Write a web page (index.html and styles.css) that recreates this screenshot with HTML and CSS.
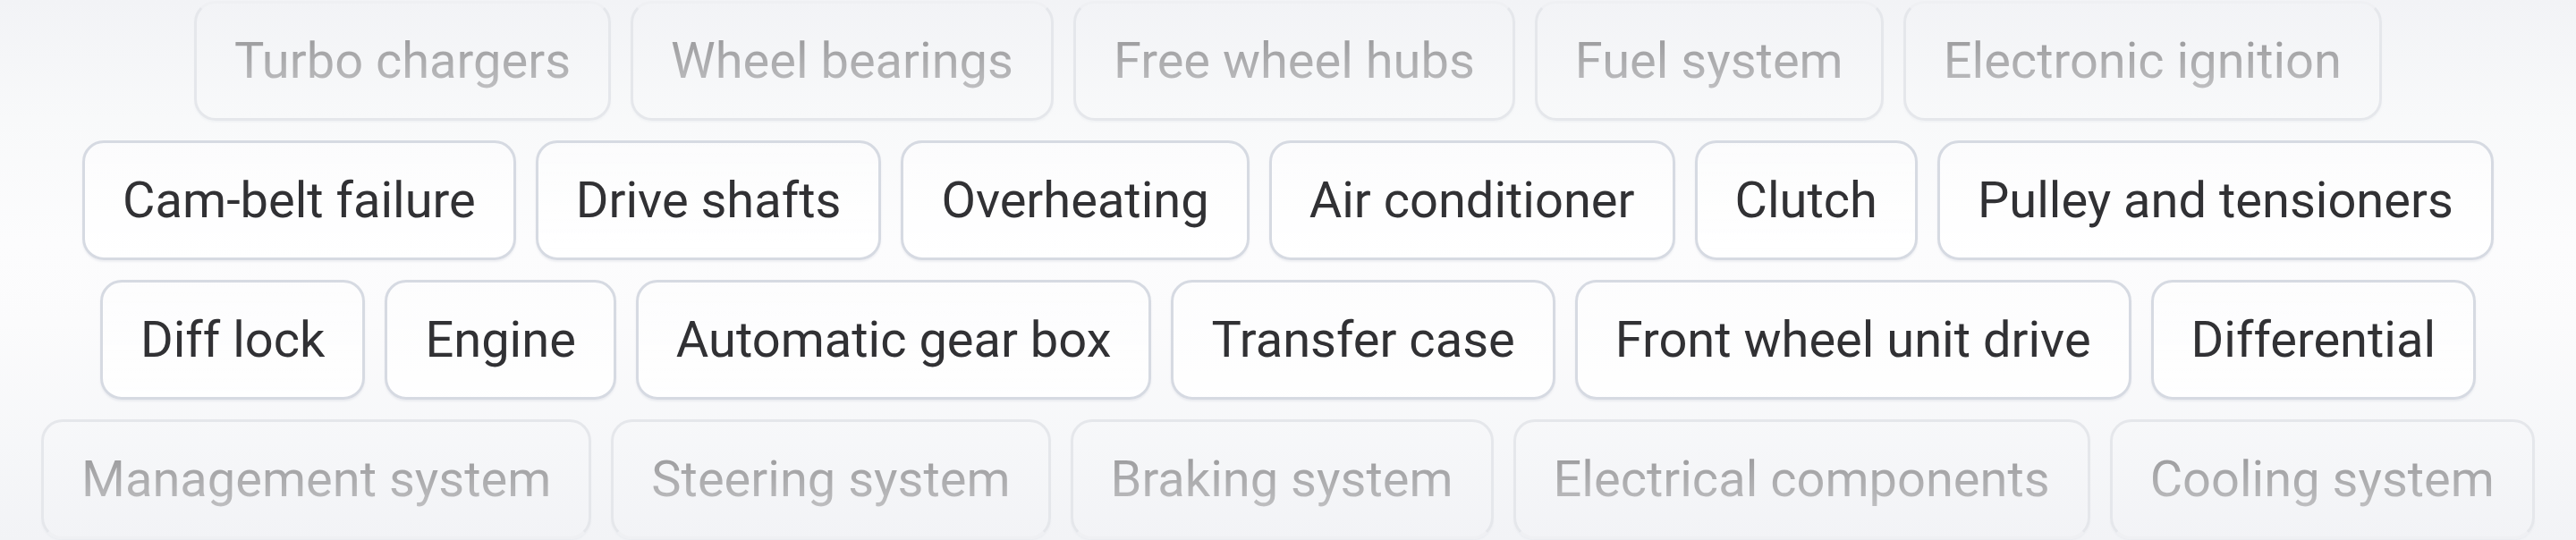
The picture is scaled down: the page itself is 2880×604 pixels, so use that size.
FILE: index.html
```html
<!DOCTYPE html>
<html lang="en">
<head>
<meta charset="utf-8">
<title>Services</title>
<link rel="stylesheet" href="styles.css">
</head>
<body>
<main class="stage">
  <div class="row row-top">
    <span class="chip chip-faded">Turbo chargers</span>
    <span class="chip chip-faded">Wheel bearings</span>
    <span class="chip chip-faded">Free wheel hubs</span>
    <span class="chip chip-faded">Fuel system</span>
    <span class="chip chip-faded">Electronic ignition</span>
  </div>
  <div class="row">
    <span class="chip">Cam-belt failure</span>
    <span class="chip">Drive shafts</span>
    <span class="chip">Overheating</span>
    <span class="chip">Air conditioner</span>
    <span class="chip">Clutch</span>
    <span class="chip">Pulley and tensioners</span>
  </div>
  <div class="row">
    <span class="chip">Diff lock</span>
    <span class="chip">Engine</span>
    <span class="chip">Automatic gear box</span>
    <span class="chip">Transfer case</span>
    <span class="chip">Front wheel unit drive</span>
    <span class="chip">Differential</span>
  </div>
  <div class="row row-bottom">
    <span class="chip chip-faded">Management system</span>
    <span class="chip chip-faded">Steering system</span>
    <span class="chip chip-faded">Braking system</span>
    <span class="chip chip-faded">Electrical components</span>
    <span class="chip chip-faded">Cooling system</span>
  </div>
</main>
</body>
</html>
```
FILE: styles.css
```css
html, body {
  margin: 0;
  padding: 0;
  height: 100%;
  overflow: hidden;
}

body {
  background:
    linear-gradient(to bottom, #f2f3f6 0%, #f8f9fa 22%, #fcfcfd 45%, #fbfbfc 60%, #f6f7f9 82%, #f2f3f6 100%);
  font-family: Roboto, "Liberation Sans", Arial, sans-serif;
}

.stage {
  display: flex;
  flex-direction: column;
  gap: 22px;
  padding-top: 1px;
}

.row {
  display: flex;
  flex-wrap: nowrap;
  justify-content: center;
  gap: 22px;
}

.chip {
  flex: none;
  display: block;
  padding: 22px 42px;
  font-size: 56px;
  line-height: 84px;
  color: #313134;
  white-space: nowrap;
  border: 3px solid #d6dae2;
  border-radius: 24px;
  background: linear-gradient(to bottom, rgba(255, 255, 255, 0.4), rgba(255, 255, 255, 0.95));
  box-shadow: 0 2px 2px rgba(140, 150, 170, 0.12);
}

.chip-faded {
  color: transparent;
  background-image: linear-gradient(to bottom, #9c9c9e 30%, #c3c3c5 80%);
  -webkit-background-clip: text;
  background-clip: text;
  border-color: #e5e7eb;
  box-shadow: 0 2px 2px rgba(140, 150, 170, 0.06);
}

.row-top .chip-faded {
  border-top-color: #eff0f3;
}

.row-bottom .chip-faded {
  border-bottom-color: #eff0f3;
}
```
